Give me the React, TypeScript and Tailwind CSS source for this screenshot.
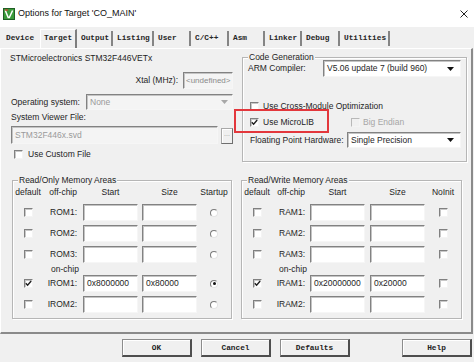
import React from 'react';

const tabs = [
  { name: 'Device', w: 'w-[38px]', sep: false },
  { name: 'Target', w: 'w-[37px]', sep: true, active: true },
  { name: 'Output', w: 'w-[36px]', sep: true },
  { name: 'Listing', w: 'w-[41px]', sep: true },
  { name: 'User', w: 'w-[37px]', sep: true },
  { name: 'C/C++', w: 'w-[38px]', sep: true },
  { name: 'Asm', w: 'w-[36px]', sep: true },
  { name: 'Linker', w: 'w-[37px]', sep: true },
  { name: 'Debug', w: 'w-[38px]', sep: true },
  { name: 'Utilities', w: 'w-[50px]', sep: true },
];

const sunken =
  'border border-t-[#828282] border-l-[#828282] border-r-[#f6f6f6] border-b-[#f6f6f6] shadow-[inset_1px_1px_0_#c4c4c4]';

const Arrow = ({ disabled = false }: { disabled?: boolean }) => (
  <svg width="7" height="4" viewBox="0 0 7 4" className="shrink-0">
    <path d="M0 0h7L3.5 4z" fill={disabled ? '#a8a8a8' : '#111'} />
  </svg>
);

const Check = ({ checked = false, disabled = false }: { checked?: boolean; disabled?: boolean }) => (
  <div
    className={`w-[9px] h-[9px] shrink-0 flex items-center justify-center border border-t-[#808080] border-l-[#808080] border-r-[#f4f4f4] border-b-[#f4f4f4] ${
      disabled ? 'bg-[#f0f0f0] border-t-[#b8b8b8] border-l-[#b8b8b8]' : 'bg-white shadow-[inset_1px_1px_0_#c8c8c8]'
    }`}
  >
    {checked && (
      <svg width="7" height="7" viewBox="0 0 7 7">
        <path d="M0.8 3.3 L2.6 5.3 L6.2 1" stroke="#202020" strokeWidth="1.4" fill="none" />
      </svg>
    )}
  </div>
);

const Radio = ({ on = false }: { on?: boolean }) => (
  <div className="w-[8px] h-[8px] rounded-full bg-white border border-t-[#7a7a7a] border-l-[#7a7a7a] border-r-[#e4e4e4] border-b-[#e4e4e4] flex items-center justify-center">
    {on && <div className="w-[3px] h-[3px] rounded-full bg-[#111]" />}
  </div>
);

const Group = ({ label, className, children }: { label: string; className: string; children: React.ReactNode }) => (
  <div className={`relative border border-[#b6b6b6] shadow-[inset_1px_1px_0_#ffffff,1px_1px_0_#ffffff] ${className}`}>
    <span className="absolute -top-[6px] left-[5px] px-[1px] leading-[11px] bg-[#f0f0f0]">{label}</span>
    {children}
  </div>
);

const romRows = [
  { label: 'ROM1:' },
  { label: 'ROM2:' },
  { label: 'ROM3:' },
];

const ramRows = [
  { label: 'RAM1:' },
  { label: 'RAM2:' },
  { label: 'RAM3:' },
];

const MemRowLeft = ({ label, def = false, start = '', size = '', on = false }: { label: string; def?: boolean; start?: string; size?: string; on?: boolean }) => (
  <div className="h-[17px] flex items-center">
    <div className="w-[30px] flex justify-center"><Check checked={def} /></div>
    <div className="w-[34px] text-right">{label}</div>
    <div className={`ml-[6px] w-[55px] h-full bg-white pl-[3px] leading-[15px] ${sunken}`}>{start}</div>
    <div className={`ml-[4px] w-[55px] h-full bg-white pl-[3px] leading-[15px] ${sunken}`}>{size}</div>
    <div className="w-[34px] flex justify-center"><Radio on={on} /></div>
  </div>
);

const MemRowRight = ({ label, def = false, start = '', size = '' }: { label: string; def?: boolean; start?: string; size?: string }) => (
  <div className="h-[17px] flex items-center">
    <div className="w-[30px] flex justify-center"><Check checked={def} /></div>
    <div className="w-[33px] text-right">{label}</div>
    <div className={`ml-[5px] w-[55px] h-full bg-white pl-[3px] leading-[15px] ${sunken}`}>{start}</div>
    <div className={`ml-[5px] w-[55px] h-full bg-white pl-[3px] leading-[15px] ${sunken}`}>{size}</div>
    <div className="w-[36px] flex justify-center"><Check /></div>
  </div>
);

const DlgButton = ({ label }: { label: string }) => (
  <button className="w-[70px] h-[18px] bg-[#f0f0f0] border border-[#8c8c8c] border-b-2 border-r-2 border-b-[#4e4e4e] border-r-[#4e4e4e] shadow-[inset_1px_1px_0_#ffffff] font-['Liberation_Mono',monospace] font-bold text-[7.8px] text-[#222] leading-[14px]">
    {label}
  </button>
);

export default function App() {
  return (
    <div className="relative w-[474px] h-[362px] overflow-hidden bg-[#f0f0f0] font-['Liberation_Sans',Arial,sans-serif] text-[8.5px] text-[#1e1e1e] flex flex-col">
      {/* title bar */}
      <div className="h-[27px] bg-white flex items-center pl-[3px] pr-[6px]">
        <svg width="12" height="12" viewBox="0 0 12 12">
          <rect x="0.5" y="0.5" width="11" height="11" fill="#3b9b3b" stroke="#1f5f24" />
          <path d="M2.3 2.5 L5.2 9.5 L6.3 9.5 L9.6 2.5" stroke="#ffffff" strokeWidth="1.5" fill="none" />
          <path d="M2 2 h3" stroke="#d63a2a" strokeWidth="1.2" />
        </svg>
        <span className="ml-[3px] text-[9px] text-[#111]">Options for Target 'CO_MAIN'</span>
        <svg width="8" height="8" viewBox="0 0 8 8" className="ml-auto">
          <path d="M0.5 0.5 L7.5 7.5 M7.5 0.5 L0.5 7.5" stroke="#222" strokeWidth="1" />
        </svg>
      </div>

      {/* tabs */}
      <div className="h-[21px] flex items-end pl-[2px] font-['Liberation_Mono',monospace] font-bold text-[7.8px] text-[#262626]">
        {tabs.map((t) =>
          t.active ? (
            <div
              key={t.name}
              className={`${t.w} h-[19px] pl-[3px] pt-[1px] leading-[14px] bg-[#f0f0f0] border-t border-l border-white border-r-2 border-r-[#7e7e7e]`}
            >
              {t.name}
            </div>
          ) : (
            <div key={t.name} className={`${t.w} h-[17px] flex items-start`}>
              <div className={`flex-1 h-[15px] pl-[4px] leading-[14px] ${t.sep ? 'border-r-2 border-r-[#858585]' : ''}`}>{t.name}</div>
            </div>
          )
        )}
      </div>

      {/* tab page */}
      <div className="h-[286px] w-[473px] shrink-0 border-t border-l border-t-white border-l-white border-r-2 border-b-2 border-r-[#8a8a8a] border-b-[#8a8a8a] flex flex-col">
        <div className="flex items-start pl-[9px]">
          {/* left column */}
          <div className="w-[223px] flex flex-col">
            <div className="mt-[4px] h-[11px] leading-[11px]">STMicroelectronics STM32F446VETx</div>
            <div className="mt-[8px] h-[17px] flex items-center justify-end gap-[5px]">
              <span>Xtal (MHz):</span>
              <div className={`w-[50px] h-full bg-[#f4f4f4] pl-[2px] leading-[15px] text-[8px] text-[#8a8a8a] ${sunken}`}>&lt;undefined&gt;</div>
            </div>
            <div className="mt-[5px] h-[16px] flex items-center">
              <span className="w-[76px] pl-[1px]">Operating system:</span>
              <div className={`w-[147px] h-full bg-[#f4f4f4] pl-[3px] pr-[4px] flex items-center justify-between text-[#9a9a9a] ${sunken}`}>
                <span>None</span>
                <Arrow disabled />
              </div>
            </div>
            <div className="mt-[2px] h-[11px] leading-[11px] pl-[1px]">System Viewer File:</div>
            <div className="mt-[3px] h-[18px] flex items-end pl-[1px]">
              <div className={`w-[207px] h-[18px] bg-[#f4f4f4] pl-[3px] leading-[16px] text-[#9a9a9a] ${sunken}`}>STM32F446x.svd</div>
              <div className="ml-[3px] w-[12px] h-[16px] border border-[#a8a8a8] border-b-[#6e6e6e] border-r-[#6e6e6e] shadow-[inset_1px_1px_0_#fff] text-[#9a9a9a] text-[7px] leading-[10px] text-center">...</div>
            </div>
            <div className="mt-[4px] h-[12px] flex items-center pl-[4px]">
              <Check />
              <span className="ml-[5px]">Use Custom File</span>
            </div>
          </div>

          {/* code generation */}
          <Group label="Code Generation" className="ml-[9px] mt-[8px] w-[225px] h-[105px] flex flex-col">
            <div className="mt-[2px] h-[17px] flex items-center justify-between pl-[5px] pr-[5px]">
              <span>ARM Compiler:</span>
              <div className={`w-[138px] h-full bg-white pl-[3px] pr-[6px] flex items-center justify-between ${sunken}`}>
                <span>V5.06 update 7 (build 960)</span>
                <Arrow />
              </div>
            </div>
            <div className="mt-[23px] h-[12px] flex items-center pl-[7px]">
              <Check />
              <span className="ml-[4px]">Use Cross-Module Optimization</span>
            </div>
            <div className="mt-[4px] h-[12px] flex items-center pl-[7px]">
              <div className="w-[101px] flex items-center">
                <Check checked />
                <span className="ml-[4px]">Use MicroLIB</span>
              </div>
              <Check disabled />
              <span className="ml-[3px] text-[#a6a6a6]">Big Endian</span>
            </div>
            <div className="mt-[4px] h-[16px] flex items-center justify-between pl-[7px] pr-[5px]">
              <span>Floating Point Hardware:</span>
              <div className={`w-[114px] h-full bg-white pl-[3px] pr-[6px] flex items-center justify-between ${sunken}`}>
                <span>Single Precision</span>
                <Arrow />
              </div>
            </div>
          </Group>
        </div>

        <div className="mt-[18px] flex items-start pl-[11px] gap-[9px]">
          <Group label="Read/Only Memory Areas" className="w-[220px] h-[139px] flex flex-col">
            <div className="mt-[6px] h-[11px] leading-[11px] flex">
              <div className="w-[30px] text-center">default</div>
              <div className="w-[34px] text-right">off-chip</div>
              <div className="ml-[6px] w-[55px] text-center">Start</div>
              <div className="ml-[4px] w-[55px] text-center">Size</div>
              <div className="w-[34px] text-center">Startup</div>
            </div>
            <div className="mt-[6px] flex flex-col gap-[4px]">
              {romRows.map((r) => (
                <MemRowLeft key={r.label} label={r.label} />
              ))}
            </div>
            <div className="h-[12px] leading-[12px] pl-[38px]">on-chip</div>
            <div className="flex flex-col gap-[4px]">
              <MemRowLeft label="IROM1:" def start="0x8000000" size="0x80000" on />
              <MemRowLeft label="IROM2:" />
            </div>
          </Group>

          <Group label="Read/Write Memory Areas" className="w-[221px] h-[139px] flex flex-col">
            <div className="mt-[6px] h-[11px] leading-[11px] flex">
              <div className="w-[30px] text-center">default</div>
              <div className="w-[33px] text-right">off-chip</div>
              <div className="ml-[5px] w-[55px] text-center">Start</div>
              <div className="ml-[5px] w-[55px] text-center">Size</div>
              <div className="w-[36px] text-center">NoInit</div>
            </div>
            <div className="mt-[6px] flex flex-col gap-[4px]">
              {ramRows.map((r) => (
                <MemRowRight key={r.label} label={r.label} />
              ))}
            </div>
            <div className="h-[12px] leading-[12px] pl-[37px]">on-chip</div>
            <div className="flex flex-col gap-[4px]">
              <MemRowRight label="IRAM1:" def start="0x20000000" size="0x20000" />
              <MemRowRight label="IRAM2:" />
            </div>
          </Group>
        </div>
      </div>

      {/* buttons */}
      <div className="flex-1 flex items-start pt-[5px] pl-[122px] pr-[2px] gap-[9px]">
        <DlgButton label="OK" />
        <DlgButton label="Cancel" />
        <DlgButton label="Defaults" />
        <div className="ml-auto">
          <DlgButton label="Help" />
        </div>
      </div>

      {/* annotation */}
      <div className="absolute left-[234px] top-[109px] w-[95px] h-[24px] border-2 border-[#e3373c]" />
    </div>
  );
}
